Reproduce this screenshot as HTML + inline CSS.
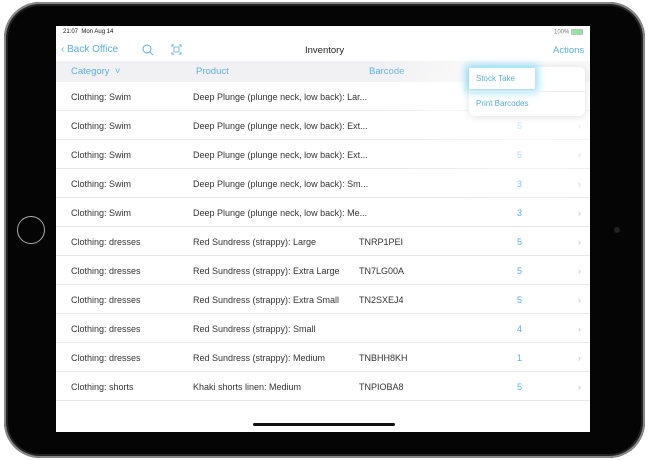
<!DOCTYPE html>
<html><head><style>
*{margin:0;padding:0;box-sizing:border-box}
body{width:650px;height:460px;background:#fff;position:relative;overflow:hidden;font-family:"Liberation Sans",sans-serif}
.frame{position:absolute;left:4px;top:2px;width:641px;height:456px;border-radius:36px;background:#050505;box-shadow:inset 0 0 0 2px #888,inset 0 0 0 4px #222}
.home{position:absolute;left:17px;top:216px;width:28px;height:28px;border-radius:50%;border:1.5px solid #aaa}
.cam{position:absolute;left:614px;top:227px;width:6px;height:6px;border-radius:50%;background:#222}
.screen{position:absolute;left:56px;top:26px;width:534px;height:406px;background:#fff;overflow:hidden;font-size:9px;color:#333}
.abs{position:absolute;white-space:nowrap}
.blue{color:#5aaee0}
.hdr{position:absolute;left:0;top:35px;width:534px;height:21px;background:#f1f1f3}
.row{position:absolute;left:0;width:534px;height:29px;border-bottom:1px solid #e9e9ec}
.row span{position:absolute;top:10px;white-space:nowrap}
.fade{position:absolute;left:0;top:0;width:534px;height:406px;background:radial-gradient(ellipse 150px 120px at 470px 70px,rgba(255,255,255,.85),rgba(255,255,255,.5) 50%,rgba(255,255,255,0) 100%)}
.pop{position:absolute;left:413px;top:41px;width:116px;height:49px;background:#fff;border-radius:6px;box-shadow:0 1px 8px rgba(0,0,0,.12)}
</style></head><body>
<div class="frame"></div>
<div class="home"></div>
<div class="cam"></div>
<div class="screen">
<div class="abs" style="left:7px;top:3px;font-size:6px;color:#111">21:07&nbsp; Mon Aug 14</div>
<div class="abs" style="left:498px;top:3px;font-size:6px;color:#111">100% <span style="display:inline-block;width:12px;height:6px;border:1px solid #999;border-radius:1px;vertical-align:middle;background:#4cd964"></span></div>
<div class="abs blue" style="left:5px;top:18px;font-size:10px">‹ Back Office</div>
<svg class="abs" style="left:86px;top:18px" width="12" height="12" viewBox="0 0 12 12"><circle cx="5" cy="5" r="4" fill="none" stroke="#5aaee0" stroke-width="1"/><path d="M8 8l3 3" stroke="#5aaee0"/></svg>
<svg class="abs" style="left:115px;top:18px" width="11" height="11" viewBox="0 0 11 11"><path d="M1 3V1h2M8 1h2v2M10 8v2H8M3 10H1V8" fill="none" stroke="#5aaee0"/><rect x="3" y="3" width="5" height="5" fill="none" stroke="#5aaee0" stroke-width=".8"/></svg>
<div class="abs" style="left:249px;top:19px;font-size:9.5px;color:#222">Inventory</div>
<div class="hdr"></div>
<div class="abs blue" style="left:15px;top:40px;font-size:9.5px">Category&nbsp; ˅</div>
<div class="abs blue" style="left:140px;top:40px;font-size:9.5px">Product</div>
<div class="abs blue" style="left:313px;top:40px;font-size:9.5px">Barcode</div>

<div class="row" style="top:56px"><span style="left:15px">Clothing: Swim</span><span style="left:137px">Deep Plunge (plunge neck, low back): Lar...</span><span class="blue" style="left:461px">5</span><span style="left:522px;color:#bbb">›</span></div>
<div class="row" style="top:85px"><span style="left:15px">Clothing: Swim</span><span style="left:137px">Deep Plunge (plunge neck, low back): Ext...</span><span class="blue" style="left:461px">5</span><span style="left:522px;color:#bbb">›</span></div>
<div class="row" style="top:114px"><span style="left:15px">Clothing: Swim</span><span style="left:137px">Deep Plunge (plunge neck, low back): Ext...</span><span class="blue" style="left:461px">5</span><span style="left:522px;color:#bbb">›</span></div>
<div class="row" style="top:143px"><span style="left:15px">Clothing: Swim</span><span style="left:137px">Deep Plunge (plunge neck, low back): Sm...</span><span class="blue" style="left:461px">3</span><span style="left:522px;color:#bbb">›</span></div>
<div class="row" style="top:172px"><span style="left:15px">Clothing: Swim</span><span style="left:137px">Deep Plunge (plunge neck, low back): Me...</span><span class="blue" style="left:461px">3</span><span style="left:522px;color:#bbb">›</span></div>
<div class="row" style="top:201px"><span style="left:15px">Clothing: dresses</span><span style="left:137px">Red Sundress (strappy): Large</span><span style="left:303px">TNRP1PEI</span><span class="blue" style="left:461px">5</span><span style="left:522px;color:#bbb">›</span></div>
<div class="row" style="top:230px"><span style="left:15px">Clothing: dresses</span><span style="left:137px">Red Sundress (strappy): Extra Large</span><span style="left:303px">TN7LG00A</span><span class="blue" style="left:461px">5</span><span style="left:522px;color:#bbb">›</span></div>
<div class="row" style="top:259px"><span style="left:15px">Clothing: dresses</span><span style="left:137px">Red Sundress (strappy): Extra Small</span><span style="left:303px">TN2SXEJ4</span><span class="blue" style="left:461px">5</span><span style="left:522px;color:#bbb">›</span></div>
<div class="row" style="top:288px"><span style="left:15px">Clothing: dresses</span><span style="left:137px">Red Sundress (strappy): Small</span><span class="blue" style="left:461px">4</span><span style="left:522px;color:#bbb">›</span></div>
<div class="row" style="top:317px"><span style="left:15px">Clothing: dresses</span><span style="left:137px">Red Sundress (strappy): Medium</span><span style="left:303px">TNBHH8KH</span><span class="blue" style="left:461px">1</span><span style="left:522px;color:#bbb">›</span></div>
<div class="row" style="top:346px"><span style="left:15px">Clothing: shorts</span><span style="left:137px">Khaki shorts linen: Medium</span><span style="left:303px">TNPIOBA8</span><span class="blue" style="left:461px">5</span><span style="left:522px;color:#bbb">›</span></div>

<div class="fade"></div>
<div class="abs blue" style="left:497px;top:19px;font-size:9.5px">Actions</div>
<div class="pop">
<div class="abs" style="left:0;top:1px;width:66px;height:21px;background:#fff;box-shadow:0 0 8px 3px rgba(100,210,245,.7)"></div>
<div class="abs blue" style="left:7px;top:7px;font-size:8px">Stock Take</div>
<div class="abs" style="left:0;top:24px;width:116px;height:1px;background:#eee"></div>
<div class="abs blue" style="left:7px;top:32px;font-size:8px">Print Barcodes</div>
</div>
<div class="abs" style="left:197px;top:397px;width:142px;height:3px;border-radius:2px;background:#111"></div>
</div>
</body></html>
